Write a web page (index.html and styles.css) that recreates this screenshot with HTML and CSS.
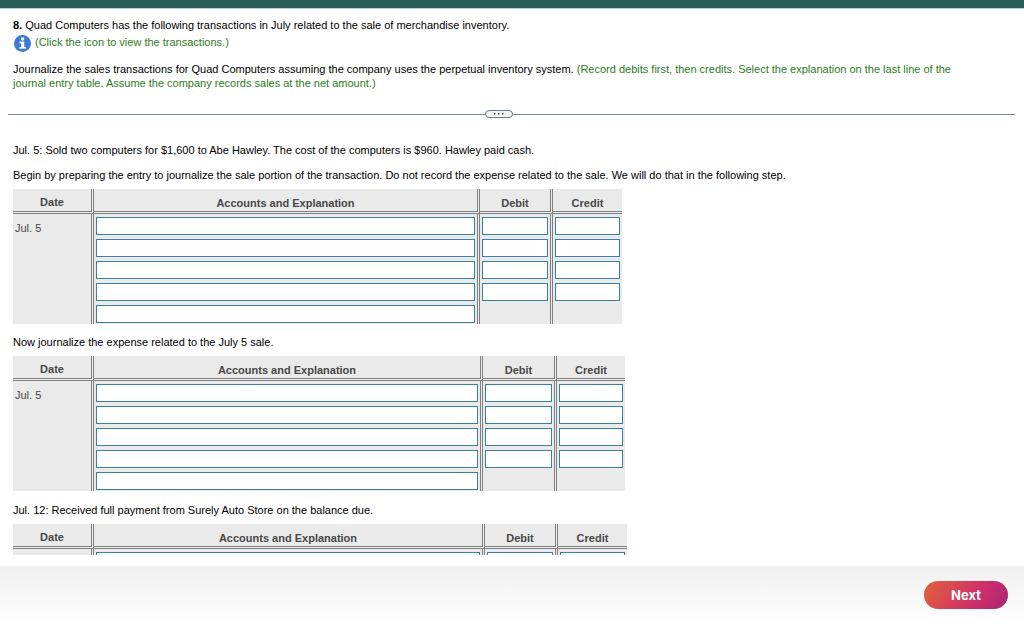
FILE: index.html
```
<!DOCTYPE html>
<html lang="en">
<head>
<meta charset="utf-8">
<title>Quad Computers – Journal Entries</title>
<link rel="stylesheet" href="styles.css">
</head>
<body>
<header class="topbar"></header>
<main class="content">
  <section class="question">
    <p class="line"><b>8.</b> Quad Computers has the following transactions in July related to the sale of merchandise inventory.</p>
    <a class="info" href="#transactions">
      <svg class="info-icon" viewBox="0 0 17 17" aria-hidden="true"><circle cx="8.5" cy="8.5" r="8.5" fill="#3d7bd6"/><circle cx="8.6" cy="4" r="1.7" fill="#fff"/><path d="M5.6 6.6h4.7v5.3h1.6v1.9H5.5v-1.9h1.7V8.4H5.6z" fill="#fff"/></svg>
      <span>(Click the icon to view the transactions.)</span>
    </a>
    <p class="line">Journalize the sales transactions for Quad Computers assuming the company uses the perpetual inventory system. <span class="hint">(Record debits first, then credits. Select the explanation on the last line of the journal entry table. Assume the company records sales at the net amount.)</span></p>
  </section>
  <div class="divider"><button class="handle" type="button" aria-label="Resize panels"><svg class="dots" viewBox="0 0 12 2" aria-hidden="true"><path d="M1 0h1.5v1.5H1zM5 0h1.5v1.5H5zM9 0h1.5v1.5H9z" fill="#444"/></svg></button></div>
  <section class="answer">
    <p class="line intro">Jul. 5: Sold two computers for $1,600 to Abe Hawley. The cost of the computers is $960. Hawley paid cash.</p>
    <p class="line">Begin by preparing the entry to journalize the sale portion of the transaction. Do not record the expense related to the sale. We will do that in the following step.</p>
    <table class="journal sale">
      <colgroup><col class="date"><col class="account"><col class="debit"><col class="credit"></colgroup>
      <thead><tr><th>Date</th><th>Accounts and Explanation</th><th>Debit</th><th>Credit</th></tr></thead>
      <tbody>
        <tr><td class="day" rowspan="5">Jul. 5</td><td><input aria-label="Account 1"></td><td><input aria-label="Debit 1"></td><td><input aria-label="Credit 1"></td></tr>
        <tr><td><input aria-label="Account 2"></td><td><input aria-label="Debit 2"></td><td><input aria-label="Credit 2"></td></tr>
        <tr><td><input aria-label="Account 3"></td><td><input aria-label="Debit 3"></td><td><input aria-label="Credit 3"></td></tr>
        <tr><td><input aria-label="Account 4"></td><td><input aria-label="Debit 4"></td><td><input aria-label="Credit 4"></td></tr>
        <tr><td><input aria-label="Explanation"></td><td></td><td></td></tr>
      </tbody>
    </table>
    <p class="line step">Now journalize the expense related to the July 5 sale.</p>
    <table class="journal expense">
      <colgroup><col class="date"><col class="account"><col class="debit"><col class="credit"></colgroup>
      <thead><tr><th>Date</th><th>Accounts and Explanation</th><th>Debit</th><th>Credit</th></tr></thead>
      <tbody>
        <tr><td class="day" rowspan="5">Jul. 5</td><td><input aria-label="Account 1"></td><td><input aria-label="Debit 1"></td><td><input aria-label="Credit 1"></td></tr>
        <tr><td><input aria-label="Account 2"></td><td><input aria-label="Debit 2"></td><td><input aria-label="Credit 2"></td></tr>
        <tr><td><input aria-label="Account 3"></td><td><input aria-label="Debit 3"></td><td><input aria-label="Credit 3"></td></tr>
        <tr><td><input aria-label="Account 4"></td><td><input aria-label="Debit 4"></td><td><input aria-label="Credit 4"></td></tr>
        <tr><td><input aria-label="Explanation"></td><td></td><td></td></tr>
      </tbody>
    </table>
    <p class="line step">Jul. 12: Received full payment from Surely Auto Store on the balance due.</p>
    <table class="journal payment">
      <colgroup><col class="date"><col class="account"><col class="debit"><col class="credit"></colgroup>
      <thead><tr><th>Date</th><th>Accounts and Explanation</th><th>Debit</th><th>Credit</th></tr></thead>
      <tbody>
        <tr><td class="day"></td><td><input aria-label="Account 1"></td><td><input aria-label="Debit 1"></td><td><input aria-label="Credit 1"></td></tr>
      </tbody>
    </table>
  </section>
</main>
<footer class="footer"><button class="next" type="button">Next</button></footer>
</body>
</html>
```
FILE: styles.css
```
* { box-sizing: border-box; }
body {
  margin: 0;
  height: 100vh;
  display: flex;
  flex-direction: column;
  overflow: hidden;
  background: #fff;
  color: #000;
  font-family: "Liberation Sans", Arial, sans-serif;
  font-size: 11px;
  line-height: 14px;
}
.topbar {
  flex: none;
  height: 9px;
  background: #285f57;
  border-bottom: 1px solid #b9c9d0;
}
.content {
  flex: 1;
  min-height: 0;
  overflow: hidden;
  margin-bottom: 11px;
}
.line { margin: 0; }
.question { padding: 9px 40px 0 13px; }
.info {
  display: flex;
  align-items: flex-start;
  gap: 4px;
  margin: 3px 0 10px 1px;
  color: #2c7d1c;
  text-decoration: none;
}
.info-icon { width: 17px; height: 17px; }
.hint { color: #2c7d1c; }
.divider {
  display: flex;
  align-items: center;
  margin: 20px 9px 0 8px;
}
.divider::before, .divider::after {
  content: "";
  flex: 19 1 0;
  height: 1px;
  background: #7e899d;
}
.divider::after { flex-grow: 20; }
.handle {
  display: flex;
  align-items: center;
  justify-content: center;
  width: 28px;
  height: 8px;
  padding: 0;
  border: 1px solid #687a92;
  border-radius: 4px;
  background: #f2f4f6;
}
.dots { width: 12px; height: 2px; }
.answer { padding: 25px 13px 0; }
.intro { margin-bottom: 11px; }
.journal {
  margin-top: 7px;
  table-layout: fixed;
  border-spacing: 0;
  background: #eaeaea;
  color: #484848;
}
.date { width: 81px; }
.sale { width: 609px; }
.sale .account { width: 386px; }
.sale .debit { width: 73px; }
.expense { width: 612px; }
.expense .account { width: 389px; }
.expense .debit { width: 74px; }
.payment { width: 614px; }
.payment .account { width: 391px; }
.payment .debit { width: 73px; }
.journal th {
  padding: 7px 2px 1px;
  border-right: 3px double #808080;
  border-bottom: 3px double #808080;
  text-align: center;
}
.journal th:first-child { padding: 6px 2px 2px; }
.journal td {
  height: 22px;
  padding: 3px 2px 1px;
  border-right: 3px double #808080;
  vertical-align: top;
}
.journal th:last-child, .journal td:last-child { border-right: 0; }
.journal .day { padding-top: 7px; }
.journal input {
  display: block;
  width: 100%;
  height: 18px;
  padding: 0 3px;
  border: 1px solid #39809f;
  border-radius: 0;
  background: #fff;
  font: inherit;
}
.step { margin-top: 12px; }
.step + .journal { margin-top: 7px; }
.step:nth-of-type(3) { margin-top: 11px; }
.footer {
  flex: none;
  display: flex;
  justify-content: flex-end;
  align-items: center;
  height: 58px;
  padding: 0 16px;
  background: linear-gradient(#f0f0f0, #fff);
}
.next {
  width: 84px;
  height: 28px;
  padding: 0;
  border: 0;
  border-radius: 14px;
  background: linear-gradient(120deg, #df5a42 10%, #d03068 60%, #a92574);
  color: #fff;
  font-family: Inter, sans-serif;
  font-size: 13px;
  font-weight: 700;
}
```
